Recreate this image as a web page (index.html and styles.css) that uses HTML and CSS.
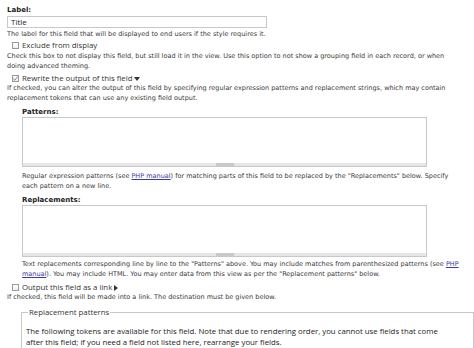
FILE: index.html
```html
<!DOCTYPE html>
<html>
<head>
<meta charset="utf-8">
<link rel="stylesheet" href="styles.css">
</head>
<body>
<div class="form">
  <div class="label">Label:</div>
  <div class="input"><span>Title</span></div>
  <div class="desc d1">The label for this field that will be displayed to end users if the style requires it.</div>

  <div class="check r1"><span class="box"></span><span>Exclude from display</span></div>
  <div class="desc d2">Check this box to not display this field, but still load it in the view. Use this option to not show a grouping field in each record, or when<br>doing advanced theming.</div>

  <div class="check r2"><span class="box checked"><svg width="7" height="7" viewBox="0 0 7 7"><path d="M1.2 3.6 L2.8 5.2 L5.9 1.3" fill="none" stroke="#8a8a8a" stroke-width="1"/></svg></span><span>Rewrite the output of this field</span><svg class="arrow" width="6" height="4" viewBox="0 0 6 4"><path d="M0 0 H6 L3 4 Z" fill="#333"/></svg></div>
  <div class="desc d3">If checked, you can alter the output of this field by specifying regular expression patterns and replacement strings, which may contain<br>replacement tokens that can use any existing field output.</div>

  <div class="nested">
    <div class="label sub l1">Patterns:</div>
    <div class="ta t1"><div class="ta-body"></div><div class="hscroll"><span class="thumb"></span></div></div>
    <div class="desc d4">Regular expression patterns (see <a href="#">PHP manual</a>) for matching parts of this field to be replaced by the "Replacements" below. Specify<br>each pattern on a new line.</div>

    <div class="label sub l2">Replacements:</div>
    <div class="ta t2"><div class="ta-body"></div><div class="hscroll"><span class="thumb"></span></div></div>
    <div class="desc d5">Text replacements corresponding line by line to the "Patterns" above. You may include matches from parenthesized patterns (see <a href="#">PHP</a><br><a href="#">manual</a>). You may include HTML. You may enter data from this view as per the "Replacement patterns" below.</div>
  </div>

  <div class="check r3"><span class="box"></span><span>Output this field as a link</span><svg class="arrow right" width="4" height="6" viewBox="0 0 4 6"><path d="M0 0 V6 L4 3 Z" fill="#333"/></svg></div>
  <div class="desc d6">If checked, this field will be made into a link. The destination must be given below.</div>

  <fieldset class="patterns">
    <legend>Replacement patterns</legend>
    <p>The following tokens are available for this field. Note that due to rendering order, you cannot use fields that come<br>after this field; if you need a field not listed here, rearrange your fields.</p>
  </fieldset>
</div>
</body>
</html>
```
FILE: styles.css
```css
html, body {
  margin: 0;
  padding: 0;
  background: #fff;
}
body {
  width: 474px;
  height: 348px;
  overflow: hidden;
}
.form {
  padding: 5px 0 0 7px;
  color: #333;
}
.label {
  font-family: "DejaVu Sans", Verdana, sans-serif;
  font-weight: bold;
  font-size: 7px;
  line-height: 10px;
  height: 10px;
  color: #222;
}
.input {
  margin-top: 1px;
  width: 255px;
  height: 10px;
  border: 1px solid #c8c8c8;
  font-family: "Open Sans", sans-serif;
  font-size: 8px;
  line-height: 10px;
  padding: 0 0 0 3px;
  color: #222;
}
.desc {
  font-family: "DejaVu Sans", Verdana, sans-serif;
  font-size: 6.5px;
  line-height: 10px;
  white-space: nowrap;
  color: #3a3a3a;
}
.desc a {
  color: #3b3ba0;
  text-decoration: underline;
}
.d1 { margin-top: 1px; }
.check {
  display: flex;
  align-items: center;
  height: 10px;
  font-family: "Open Sans", sans-serif;
  font-size: 7.8px;
  line-height: 10px;
  color: #333;
  padding-left: 5px;
}
.box {
  width: 5px;
  height: 5px;
  border: 1px solid #9a9a9a;
  background: linear-gradient(#fff, #eee);
  margin-right: 3px;
  display: flex;
}
.box svg { margin: -1px; }
.arrow { margin-left: 2px; margin-top: 1px; }
.r1 { margin-top: 1px; }
.d2 { margin-top: 1px; }
.r2 { margin-top: 2px; }
.d3 { margin-top: 0; }
.nested {
  padding-left: 15px;
}
.l1 { margin-top: 4px; }
.ta {
  width: 403px;
  border: 1px solid #c8c8c8;
  display: flex;
  flex-direction: column;
}
.t1 { height: 48px; }
.t2 { height: 50px; }
.ta-body { flex: 1; }
.hscroll {
  height: 3px;
  background: #e6e6e6;
  position: relative;
}
.thumb {
  position: absolute;
  left: 193px;
  top: 0;
  width: 18px;
  height: 3px;
  background: #c9c9c9;
}
.d4 { margin-top: 4px; }
.l2 { margin-top: 4px; }
.d5 { margin-top: 2px; }
.r3 { margin-top: 3px; }
.d6 { margin-top: 0; }
.patterns {
  margin: 5px 0 0 14px;
  padding: 9px 4px 6px 4px;
  border: 1px solid #c8c8c8;
  font-family: "Open Sans", sans-serif;
  font-size: 7.8px;
  line-height: 11px;
  color: #222;
  min-height: 40px;
}
.patterns legend {
  padding: 0 1px;
  margin-left: 2px;
  line-height: 10px;
  color: #333;
}
.patterns p {
  margin: 0;
  white-space: nowrap;
}
```
